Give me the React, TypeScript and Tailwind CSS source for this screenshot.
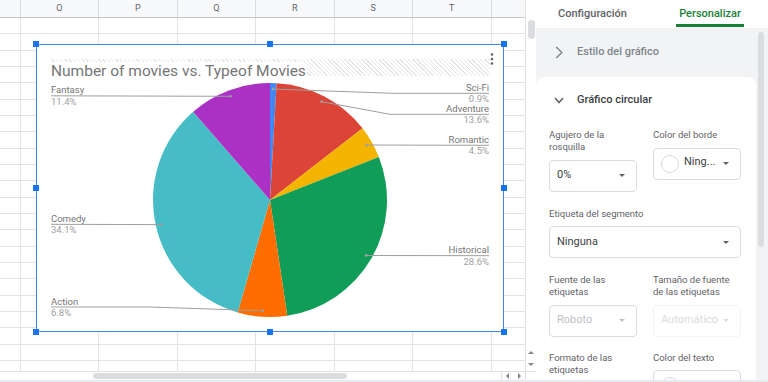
import React from 'react';

const COLS = ['', 'O', 'P', 'Q', 'R', 'S', 'T', ''];
const COL_W = [
  'w-[20.5px]',
  'w-[78.5px]',
  'w-[78.5px]',
  'w-[78.5px]',
  'w-[78.5px]',
  'w-[78.5px]',
  'w-[78.5px]',
  'flex-1',
];
const ROWS = Array.from({ length: 22 }, (_, i) => i);

const SLICES = [
  { name: 'Sci-Fi', pct: 0.9, color: '#4285f4' },
  { name: 'Adventure', pct: 13.6, color: '#db4437' },
  { name: 'Romantic', pct: 4.5, color: '#f4b400' },
  { name: 'Historical', pct: 28.6, color: '#0f9d58' },
  { name: 'Action', pct: 6.8, color: '#ff6d01' },
  { name: 'Comedy', pct: 34.1, color: '#46bdc6' },
  { name: 'Fantasy', pct: 11.4, color: '#ab30c4' },
];

// leader lines, in page coordinates
const LABELS = [
  { name: 'Sci-Fi', pct: '0.9%', side: 'r', y: 93.3, pts: [[273, 89], [393, 93.3], [489, 93.3]] },
  { name: 'Adventure', pct: '13.6%', side: 'r', y: 114.3, pts: [[321.6, 101.7], [390, 114.3], [489, 114.3]] },
  { name: 'Romantic', pct: '4.5%', side: 'r', y: 145.3, pts: [[366.4, 145], [489, 145.3]] },
  { name: 'Historical', pct: '28.6%', side: 'r', y: 255.7, pts: [[366.2, 255.5], [489, 255.7]] },
  { name: 'Action', pct: '6.8%', side: 'l', y: 307, pts: [[263, 310.8], [150, 307], [51, 307]] },
  { name: 'Comedy', pct: '34.1%', side: 'l', y: 224.3, pts: [[161.8, 224.6], [51, 224.3]] },
  { name: 'Fantasy', pct: '11.4%', side: 'l', y: 95.8, pts: [[230.4, 96.3], [51, 95.8]] },
];

const CX = 270;
const CY = 200;
const R = 117;

function slicePath(start: number, end: number) {
  const a0 = start * 2 * Math.PI;
  const a1 = end * 2 * Math.PI;
  const x0 = CX + R * Math.sin(a0);
  const y0 = CY - R * Math.cos(a0);
  const x1 = CX + R * Math.sin(a1);
  const y1 = CY - R * Math.cos(a1);
  const large = end - start > 0.5 ? 1 : 0;
  return `M${CX} ${CY}L${x0} ${y0}A${R} ${R} 0 ${large} 1 ${x1} ${y1}Z`;
}

function Pie() {
  const total = SLICES.reduce((s, x) => s + x.pct, 0);
  let acc = 0;
  return (
    <svg className="absolute inset-0" width="466" height="286" viewBox="37 45 466 286" fontFamily="Roboto, sans-serif">
      {SLICES.map((s) => {
        const start = acc / total;
        acc += s.pct;
        const end = acc / total;
        return <path key={s.name} d={slicePath(start, end)} fill={s.color} />;
      })}
      {LABELS.map((l) => {
        const right = l.side === 'r';
        const x = right ? 489 : 51;
        return (
          <g key={l.name}>
            <polyline points={l.pts.map((p) => p.join(',')).join(' ')} fill="none" stroke="#9e9e9e" strokeWidth="1" />
            <circle cx={l.pts[0][0]} cy={l.pts[0][1]} r="1.4" fill="#9e9e9e" />
            <text x={x} y={l.y - 2.5} fontSize="9.5" fill="#757575" textAnchor={right ? 'end' : 'start'}>
              {l.name}
            </text>
            <text x={x} y={l.y + 9} fontSize="9.5" fill="#a0a0a0" textAnchor={right ? 'end' : 'start'}>
              {l.pct}
            </text>
          </g>
        );
      })}
    </svg>
  );
}

function Handle({ className }: { className: string }) {
  return <div className={`absolute h-[6px] w-[6px] bg-[#1a73e8] ${className}`} />;
}

function Chart() {
  return (
    <div className="absolute left-[36px] top-[44px] h-[288px] w-[468px] border border-[#4a86e8] bg-white">
      <Pie />
      <div className="relative ml-[14px] mr-[13px] mt-[14px] h-[17px] bg-[repeating-linear-gradient(45deg,#e6e6e6_0px,#e6e6e6_1px,transparent_1px,transparent_3px)]">
        <span className="bg-white text-[15.5px] leading-[17px] text-[#757575]">Number of movies vs. Typeof Movies</span>
      </div>
      <svg className="absolute left-[453px] top-[8px]" width="4" height="12" viewBox="0 0 4 12">
        <circle cx="2" cy="1.5" r="1.3" fill="#5f6368" />
        <circle cx="2" cy="6" r="1.3" fill="#5f6368" />
        <circle cx="2" cy="10.5" r="1.3" fill="#5f6368" />
      </svg>
      <Handle className="-left-[4px] -top-[4px]" />
      <Handle className="left-1/2 -top-[4px] -translate-x-1/2" />
      <Handle className="-right-[4px] -top-[4px]" />
      <Handle className="-left-[4px] top-1/2 -translate-y-1/2" />
      <Handle className="-right-[4px] top-1/2 -translate-y-1/2" />
      <Handle className="-left-[4px] -bottom-[4px]" />
      <Handle className="left-1/2 -bottom-[4px] -translate-x-1/2" />
      <Handle className="-right-[4px] -bottom-[4px]" />
    </div>
  );
}

function Tri({ color = '#5f6368', dir = 'down' }: { color?: string; dir?: 'down' | 'up' | 'left' | 'right' }) {
  const d = {
    down: 'M0 0L3 3L6 0Z',
    up: 'M0 3L3 0L6 3Z',
    left: 'M3 0L0 3L3 6Z',
    right: 'M0 0L3 3L0 6Z',
  }[dir];
  const horiz = dir === 'left' || dir === 'right';
  return (
    <svg width={horiz ? 3 : 6} height={horiz ? 6 : 3} viewBox={horiz ? '0 0 3 6' : '0 0 6 3'}>
      <path d={d} fill={color} />
    </svg>
  );
}

function Sheet() {
  return (
    <div className="flex w-[536px] flex-col">
      <div className="flex h-[371px]">
        <div className="relative w-[525px] overflow-hidden">
          <div className="flex h-[18px] border-b border-[#c4c7c5] bg-[#f8f9fa]">
            {COLS.map((c, i) => (
              <div
                key={i}
                className={`${COL_W[i]} flex items-center justify-center text-[9px] text-[#5f6368] ${i < COLS.length - 1 ? 'border-r border-[#dadce0]' : ''}`}
              >
                {c}
              </div>
            ))}
          </div>
          {ROWS.map((r) => (
            <div key={r} className="flex h-[16.33px] border-b border-[#e2e3e3]">
              {COLS.map((_, i) => (
                <div key={i} className={`${COL_W[i]} ${i < COLS.length - 1 ? 'border-r border-[#e2e3e3]' : ''}`} />
              ))}
            </div>
          ))}
          <Chart />
        </div>
        <div className="flex w-[11px] flex-col border-l border-[#e0e0e0]">
          <div className="ml-[2px] mt-[20px] h-[19px] w-[6.5px] rounded-full bg-[#dadce0]" />
          <div className="mt-auto flex flex-col items-center pb-[1px]">
            <div className="flex h-[12px] items-center">
              <Tri dir="up" color="#80868b" />
            </div>
            <div className="flex h-[12px] items-center">
              <Tri dir="down" color="#80868b" />
            </div>
          </div>
        </div>
      </div>
      <div className="flex h-[9px] border-t border-[#e0e0e0]">
        <div className="flex flex-1 items-center">
          <div className="ml-[93px] h-[6px] w-[254px] rounded-full bg-[#dadce0]" />
        </div>
        <div className="flex w-[24.5px] border-l border-[#e0e0e0]">
          <div className="flex w-[12px] items-center justify-center">
            <Tri dir="left" color="#80868b" />
          </div>
          <div className="flex w-[12px] items-center justify-center">
            <Tri dir="right" color="#80868b" />
          </div>
        </div>
        <div className="w-[11px] border-l border-[#e0e0e0]" />
      </div>
    </div>
  );
}

function Label({ children }: { children: React.ReactNode }) {
  return <div className="text-[9.5px] leading-[12px] text-[#5f6368]">{children}</div>;
}

function Select({
  children,
  tone = 'normal',
}: {
  children?: React.ReactNode;
  tone?: 'normal' | 'disabled' | 'faint';
}) {
  const box =
    tone === 'faint' ? 'border-[#f1f3f4] text-[#dadce0]' : tone === 'disabled' ? 'border-[#dadce0] text-[#bdc1c6]' : 'border-[#dadce0] text-[#3c4043]';
  const tri = tone === 'faint' ? '#dadce0' : tone === 'disabled' ? '#bdc1c6' : '#5f6368';
  return (
    <div className={`mt-[6.5px] flex h-[32px] items-center justify-between rounded-[4px] border pl-[7px] pr-[11px] text-[11px] ${box}`}>
      <div className="flex items-center">{children}</div>
      <Tri color={tri} />
    </div>
  );
}

function Swatch() {
  return <div className="mr-[5px] h-[18px] w-[18px] rounded-full border border-[#dadce0] bg-white" />;
}

function Panel() {
  return (
    <div className="flex w-[232px] flex-col">
      <div className="flex h-[28px] bg-white text-[11px] font-medium">
        <div className="flex flex-1 justify-center">
          <div className="-ml-[3px] flex h-[27px] items-center border-b-[3px] border-transparent px-[3.5px] pt-[5px] text-[#5f6368]">Configuración</div>
        </div>
        <div className="flex flex-1 justify-center">
          <div className="flex h-[27px] items-center border-b-[3px] border-[#188038] px-[3.5px] pt-[5px] text-[#188038]">Personalizar</div>
        </div>
      </div>
      <div className="flex flex-1 overflow-hidden bg-[#f1f3f4]">
        <div className="flex w-[220px] flex-col">
          <div className="flex h-[49px] shrink-0 items-center pl-[19px]">
            <svg width="8" height="13" viewBox="0 0 8 13">
              <path d="M1.2 1L6.8 6.5L1.2 12" fill="none" stroke="#80868b" strokeWidth="1.4" />
            </svg>
            <span className="ml-[14px] text-[11px] font-medium text-[#80868b]">Estilo del gráfico</span>
          </div>
          <div className="flex-1 rounded-t-[8px] bg-white pl-[13px] pr-[15px]">
            <div className="-ml-[13px] flex h-[46px] items-center pl-[18px]">
              <svg width="10" height="7" viewBox="0 0 10 7">
                <path d="M1 1L5 5.5L9 1" fill="none" stroke="#5f6368" strokeWidth="1.5" />
              </svg>
              <span className="ml-[13px] text-[11px] font-medium text-[#3c4043]">Gráfico circular</span>
            </div>
            <div className="grid grid-cols-2 items-start gap-x-[16px] pt-[6px]">
              <div>
                <Label>
                  Agujero de la
                  <br />
                  rosquilla
                </Label>
                <Select>0%</Select>
              </div>
              <div>
                <Label>Color del borde</Label>
                <Select>
                  <Swatch />
                  <span className="-mt-[3px]">Ning...</span>
                </Select>
              </div>
            </div>
            <div className="mt-[16px]">
              <Label>Etiqueta del segmento</Label>
              <Select>Ninguna</Select>
            </div>
            <div className="mt-[16px] grid grid-cols-2 items-start gap-x-[16px]">
              <div>
                <Label>
                  Fuente de las
                  <br />
                  etiquetas
                </Label>
                <Select tone="disabled">Roboto</Select>
              </div>
              <div>
                <Label>
                  Tamaño de fuente
                  <br />
                  de las etiquetas
                </Label>
                <Select tone="faint">Automático</Select>
              </div>
            </div>
            <div className="mt-[15px] grid grid-cols-2 items-start gap-x-[16px]">
              <div>
                <Label>
                  Formato de las
                  <br />
                  etiquetas
                </Label>
                <Select />
              </div>
              <div>
                <Label>Color del texto</Label>
                <Select>
                  <Swatch />
                </Select>
              </div>
            </div>
          </div>
        </div>
        <div className="ml-[2px] mt-[4px] h-[215px] w-[6px] rounded-full bg-[#dadce0]" />
      </div>
    </div>
  );
}

export default function App() {
  return (
    <div className="flex h-[382px] w-[768px] flex-col overflow-hidden bg-white font-['Roboto',sans-serif]">
      <div className="flex h-[380px]">
        <Sheet />
        <Panel />
      </div>
      <div className="h-[2px] bg-[#e8eaed]" />
    </div>
  );
}
